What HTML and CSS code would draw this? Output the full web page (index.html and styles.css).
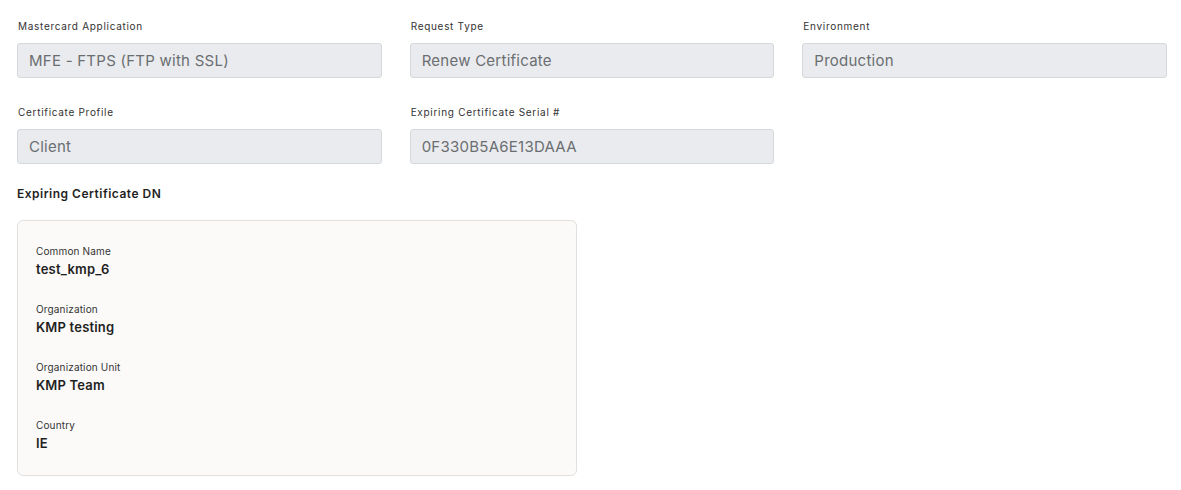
FILE: index.html
```html
<!DOCTYPE html>
<html lang="en">
<head>
    <meta charset="UTF-8">
    <meta name="viewport" content="width=device-width, initial-scale=1.0">
    <title>Certificate Request</title>
    <link rel="stylesheet" href="styles.css">
</head>
<body>
    <div class="form-grid">
        <div class="field">
            <label class="field-label">Mastercard Application</label>
            <div class="field-input">MFE - FTPS (FTP with SSL)</div>
        </div>
        <div class="field">
            <label class="field-label">Request Type</label>
            <div class="field-input">Renew Certificate</div>
        </div>
        <div class="field">
            <label class="field-label">Environment</label>
            <div class="field-input">Production</div>
        </div>
        <div class="field">
            <label class="field-label">Certificate Profile</label>
            <div class="field-input">Client</div>
        </div>
        <div class="field">
            <label class="field-label">Expiring Certificate Serial #</label>
            <div class="field-input">0F330B5A6E13DAAA</div>
        </div>
    </div>

    <h2 class="section-title">Expiring Certificate DN</h2>

    <div class="dn-card">
        <div class="dn-item">
            <div class="dn-label">Common Name</div>
            <div class="dn-value">test_kmp_6</div>
        </div>
        <div class="dn-item">
            <div class="dn-label">Organization</div>
            <div class="dn-value">KMP testing</div>
        </div>
        <div class="dn-item">
            <div class="dn-label">Organization Unit</div>
            <div class="dn-value">KMP Team</div>
        </div>
        <div class="dn-item">
            <div class="dn-label">Country</div>
            <div class="dn-value">IE</div>
        </div>
    </div>
</body>
</html>
```

FILE: styles.css
```css
body {
    margin: 0;
    padding: 19px 14px 0 17px;
    font-family: 'Inter', 'Open Sans', sans-serif;
    background: #ffffff;
    color: #222222;
}

.form-grid {
    display: grid;
    grid-template-columns: repeat(3, 1fr);
    column-gap: 28px;
    row-gap: 27px;
}

.field {
    display: flex;
    flex-direction: column;
}

.field-label {
    font-size: 10px;
    line-height: 14px;
    letter-spacing: 0.7px;
    color: #333333;
    margin-bottom: 10px;
    padding-left: 1px;
}

.field-input {
    height: 35px;
    box-sizing: border-box;
    padding: 0 11px;
    display: flex;
    align-items: center;
    background: #e9ebee;
    border: 1px solid #d6d9dc;
    border-radius: 3px;
    font-size: 15px;
    letter-spacing: 0.25px;
    color: #6b6e71;
}

.section-title {
    margin: 22px 0 18px;
    font-size: 12px;
    line-height: 16px;
    letter-spacing: 0.5px;
    font-weight: 600;
    color: #1f1f1f;
}

.dn-card {
    width: 560px;
    box-sizing: border-box;
    padding: 23px 18px 23px;
    background: #fbfaf9;
    border: 1px solid #e2e0de;
    border-radius: 6px;
}

.dn-item {
    margin-bottom: 24px;
}

.dn-item:last-child {
    margin-bottom: 0;
}

.dn-label {
    font-size: 10px;
    line-height: 14px;
    letter-spacing: 0.15px;
    color: #333333;
    margin-bottom: 2px;
}

.dn-value {
    font-size: 13px;
    line-height: 18px;
    letter-spacing: 0.2px;
    font-weight: 600;
    color: #1f1f1f;
}
```
